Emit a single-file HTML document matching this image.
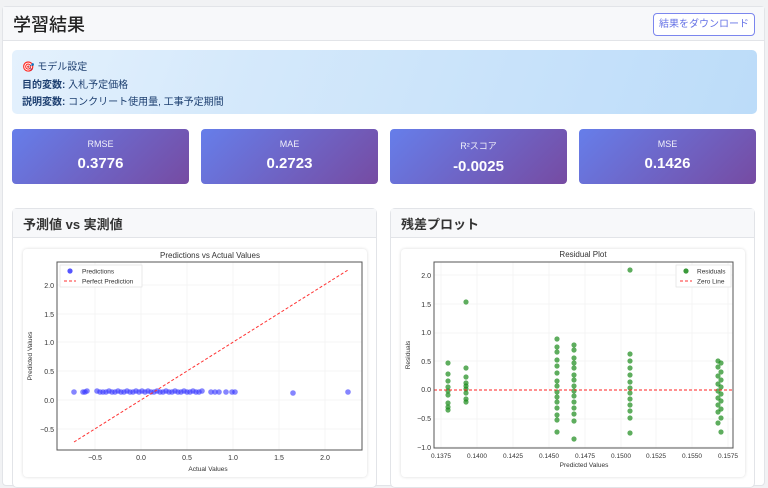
<!DOCTYPE html>
<html><head><meta charset="utf-8"><style>
*{margin:0;padding:0;box-sizing:border-box}
body{width:768px;height:480px;overflow:hidden;background:#f1f2f4;font-family:"Liberation Sans","Noto Sans CJK JP",sans-serif;position:relative}
.main{position:absolute;left:2px;top:6px;width:763px;height:480px;background:#fff;border:1px solid #e2e4e8;border-radius:4px}
.hdr{position:absolute;left:0;top:0;width:100%;height:34px;background:#f7f8fa;border-bottom:1px solid #e2e4e8}
.hdr h1{position:absolute;left:10px;top:4px;font-size:18px;font-weight:500;color:#222}
.btn{position:absolute;right:9px;top:6px;width:102px;height:23px;border:1px solid #7b86ee;border-radius:4px;color:#6673e6;font-size:10px;text-align:center;line-height:21px;background:#fff}
.info{position:absolute;left:12px;top:50px;width:745px;height:64px;border-radius:5px;background:linear-gradient(110deg,#e4f1fd 0%,#d5e9fb 30%,#bcdcf9 100%);color:#1d3f70;font-size:10px}
.info div{position:absolute;left:10px}
.m{position:absolute;top:129px;width:177px;height:55px;border-radius:4px;background:linear-gradient(135deg,#667eea,#764ba2);color:#fff;text-align:center}
.m .l{font-size:9px;margin-top:10px;opacity:.9}
.m .v{font-size:15px;font-weight:bold;margin-top:6px}
.card{position:absolute;top:208px;height:280px;border:1px solid #e2e4e8;border-radius:5px;background:#fff}
.card .ch{height:29px;background:#f7f8fa;border-bottom:1px solid #e2e4e8;font-size:13px;font-weight:bold;color:#333;padding:5px 10px}
.inner{position:absolute;top:40px;height:228px;border-radius:4px;box-shadow:0 0 3px rgba(0,0,0,.15);background:#fff}
svg{position:absolute;left:0;top:0}
svg text{font-family:"Liberation Sans",sans-serif;fill:#333}
</style></head><body>
<div class="main"><div class="hdr"><h1>学習結果</h1><div class="btn">結果をダウンロード</div></div></div>
<div class="info">
<div style="top:8px">🎯 モデル設定</div>
<div style="top:26px"><b>目的変数:</b> 入札予定価格</div>
<div style="top:43px"><b>説明変数:</b> コンクリート使用量, 工事予定期間</div>
</div>
<div class="m" style="left:12px"><div class="l">RMSE</div><div class="v">0.3776</div></div>
<div class="m" style="left:201px"><div class="l">MAE</div><div class="v">0.2723</div></div>
<div class="m" style="left:390px"><div class="l">R²スコア</div><div class="v">-0.0025</div></div>
<div class="m" style="left:579px"><div class="l">MSE</div><div class="v">0.1426</div></div>
<div class="card" style="left:12px;width:365px"><div class="ch">予測値 vs 実測値</div><div class="inner" style="left:10px;width:344px"></div></div>
<div class="card" style="left:390px;width:365px"><div class="ch">残差プロット</div><div class="inner" style="left:10px;width:344px"></div></div>
<svg width="768" height="480" font-size="7">
<!-- left chart -->
<g stroke="#eee" stroke-width="0.6">
<line x1="95" y1="262" x2="95" y2="450"/><line x1="141" y1="262" x2="141" y2="450"/><line x1="187" y1="262" x2="187" y2="450"/><line x1="233" y1="262" x2="233" y2="450"/><line x1="279" y1="262" x2="279" y2="450"/><line x1="325" y1="262" x2="325" y2="450"/>
<line x1="57" y1="285" x2="362" y2="285"/><line x1="57" y1="314" x2="362" y2="314"/><line x1="57" y1="342" x2="362" y2="342"/><line x1="57" y1="371" x2="362" y2="371"/><line x1="57" y1="400" x2="362" y2="400"/><line x1="57" y1="429" x2="362" y2="429"/>
</g>
<g fill="#3333ff" fill-opacity="0.6">
<circle cx="74" cy="392" r="2.8"/><circle cx="83" cy="392" r="2.8"/><circle cx="85" cy="392" r="2.8"/><circle cx="87" cy="391" r="2.8"/>
<circle cx="97" cy="391" r="2.8"/><circle cx="100" cy="392" r="2.8"/><circle cx="103" cy="392" r="2.8"/><circle cx="106" cy="392" r="2.8"/><circle cx="109" cy="391" r="2.8"/><circle cx="112" cy="392" r="2.8"/><circle cx="115" cy="392" r="2.8"/><circle cx="118" cy="391" r="2.8"/><circle cx="121" cy="392" r="2.8"/><circle cx="124" cy="392" r="2.8"/><circle cx="127" cy="391" r="2.8"/><circle cx="130" cy="392" r="2.8"/><circle cx="133" cy="392" r="2.8"/><circle cx="136" cy="391" r="2.8"/><circle cx="139" cy="392" r="2.8"/><circle cx="142" cy="391" r="2.8"/><circle cx="145" cy="392" r="2.8"/><circle cx="148" cy="391" r="2.8"/><circle cx="151" cy="392" r="2.8"/><circle cx="154" cy="392" r="2.8"/><circle cx="157" cy="391" r="2.8"/><circle cx="160" cy="392" r="2.8"/><circle cx="163" cy="392" r="2.8"/><circle cx="166" cy="391" r="2.8"/><circle cx="169" cy="392" r="2.8"/><circle cx="172" cy="392" r="2.8"/><circle cx="175" cy="391" r="2.8"/><circle cx="178" cy="392" r="2.8"/><circle cx="181" cy="392" r="2.8"/><circle cx="184" cy="391" r="2.8"/><circle cx="187" cy="392" r="2.8"/><circle cx="190" cy="392" r="2.8"/><circle cx="193" cy="391" r="2.8"/><circle cx="196" cy="392" r="2.8"/><circle cx="199" cy="392" r="2.8"/><circle cx="202" cy="391" r="2.8"/>
<circle cx="211" cy="392" r="2.8"/><circle cx="215" cy="392" r="2.8"/><circle cx="219" cy="392" r="2.8"/><circle cx="226" cy="392" r="2.8"/><circle cx="232" cy="392" r="2.8"/><circle cx="235" cy="392" r="2.8"/><circle cx="293" cy="393" r="2.8"/><circle cx="348" cy="392" r="2.8"/>
</g>
<line x1="74" y1="442" x2="348" y2="270" stroke="#ff3333" stroke-width="1" stroke-dasharray="3,2"/>
<rect x="57" y="262" width="305" height="188" fill="none" stroke="#555" stroke-width="1"/>
<text x="210" y="258" text-anchor="middle" font-size="8">Predictions vs Actual Values</text>
<rect x="60" y="265" width="82" height="22" fill="#fff" stroke="#ddd" stroke-width="0.6"/>
<circle cx="70" cy="271" r="2.6" fill="#5555ff"/><text x="82" y="273.5" font-size="6.5">Predictions</text>
<line x1="64" y1="281" x2="76" y2="281" stroke="#f33" stroke-dasharray="3,2"/><text x="82" y="283.5" font-size="6.5">Perfect Prediction</text>
<g text-anchor="end"><text x="54" y="288">2.0</text><text x="54" y="317">1.5</text><text x="54" y="345">1.0</text><text x="54" y="374">0.5</text><text x="54" y="403">0.0</text><text x="54" y="432">−0.5</text></g>
<g text-anchor="middle"><text x="95" y="460">−0.5</text><text x="141" y="460">0.0</text><text x="187" y="460">0.5</text><text x="233" y="460">1.0</text><text x="279" y="460">1.5</text><text x="325" y="460">2.0</text><text x="208" y="471" font-size="6.5">Actual Values</text></g>
<text transform="translate(32,356) rotate(-90)" text-anchor="middle" font-size="6.5">Predicted Values</text>
<!-- right chart -->
<g stroke="#eee" stroke-width="0.6">
<line x1="441" y1="262" x2="441" y2="448"/><line x1="477" y1="262" x2="477" y2="448"/><line x1="513" y1="262" x2="513" y2="448"/><line x1="549" y1="262" x2="549" y2="448"/><line x1="585" y1="262" x2="585" y2="448"/><line x1="621" y1="262" x2="621" y2="448"/><line x1="656" y1="262" x2="656" y2="448"/><line x1="692" y1="262" x2="692" y2="448"/><line x1="728" y1="262" x2="728" y2="448"/>
<line x1="434" y1="275" x2="733" y2="275"/><line x1="434" y1="304" x2="733" y2="304"/><line x1="434" y1="333" x2="733" y2="333"/><line x1="434" y1="361" x2="733" y2="361"/><line x1="434" y1="419" x2="733" y2="419"/><line x1="434" y1="447" x2="733" y2="447"/>
</g>
<g fill="#1a8a1a" fill-opacity="0.7">
<circle cx="448" cy="363" r="2.6"/><circle cx="448" cy="374" r="2.6"/><circle cx="448" cy="381" r="2.6"/><circle cx="448" cy="387" r="2.6"/><circle cx="448" cy="391" r="2.6"/><circle cx="448" cy="395" r="2.6"/><circle cx="448" cy="403" r="2.6"/><circle cx="448" cy="407" r="2.6"/><circle cx="448" cy="410" r="2.6"/>
<circle cx="466" cy="302" r="2.6"/><circle cx="466" cy="368" r="2.6"/><circle cx="466" cy="377" r="2.6"/><circle cx="466" cy="383" r="2.6"/><circle cx="466" cy="386" r="2.6"/><circle cx="466" cy="389" r="2.6"/><circle cx="466" cy="393" r="2.6"/><circle cx="466" cy="399" r="2.6"/><circle cx="466" cy="402" r="2.6"/>
<circle cx="557" cy="339" r="2.6"/><circle cx="557" cy="347" r="2.6"/><circle cx="557" cy="352" r="2.6"/><circle cx="557" cy="360" r="2.6"/><circle cx="557" cy="366" r="2.6"/><circle cx="557" cy="373" r="2.6"/><circle cx="557" cy="381" r="2.6"/><circle cx="557" cy="386" r="2.6"/><circle cx="557" cy="392" r="2.6"/><circle cx="557" cy="397" r="2.6"/><circle cx="557" cy="402" r="2.6"/><circle cx="557" cy="408" r="2.6"/><circle cx="557" cy="415" r="2.6"/><circle cx="557" cy="420" r="2.6"/><circle cx="557" cy="432" r="2.6"/>
<circle cx="574" cy="345" r="2.6"/><circle cx="574" cy="350" r="2.6"/><circle cx="574" cy="358" r="2.6"/><circle cx="574" cy="363" r="2.6"/><circle cx="574" cy="368" r="2.6"/><circle cx="574" cy="375" r="2.6"/><circle cx="574" cy="380" r="2.6"/><circle cx="574" cy="386" r="2.6"/><circle cx="574" cy="391" r="2.6"/><circle cx="574" cy="396" r="2.6"/><circle cx="574" cy="402" r="2.6"/><circle cx="574" cy="408" r="2.6"/><circle cx="574" cy="414" r="2.6"/><circle cx="574" cy="421" r="2.6"/><circle cx="574" cy="439" r="2.6"/>
<circle cx="630" cy="270" r="2.6"/><circle cx="630" cy="354" r="2.6"/><circle cx="630" cy="361" r="2.6"/><circle cx="630" cy="368" r="2.6"/><circle cx="630" cy="375" r="2.6"/><circle cx="630" cy="382" r="2.6"/><circle cx="630" cy="388" r="2.6"/><circle cx="630" cy="393" r="2.6"/><circle cx="630" cy="399" r="2.6"/><circle cx="630" cy="405" r="2.6"/><circle cx="630" cy="411" r="2.6"/><circle cx="630" cy="418" r="2.6"/><circle cx="630" cy="433" r="2.6"/>
<circle cx="718" cy="361" r="2.6"/><circle cx="718" cy="367" r="2.6"/><circle cx="718" cy="376" r="2.6"/><circle cx="718" cy="384" r="2.6"/><circle cx="718" cy="391" r="2.6"/><circle cx="718" cy="398" r="2.6"/><circle cx="718" cy="405" r="2.6"/><circle cx="718" cy="412" r="2.6"/><circle cx="718" cy="423" r="2.6"/>
<circle cx="721" cy="363" r="2.6"/><circle cx="721" cy="372" r="2.6"/><circle cx="721" cy="380" r="2.6"/><circle cx="721" cy="387" r="2.6"/><circle cx="721" cy="394" r="2.6"/><circle cx="721" cy="401" r="2.6"/><circle cx="721" cy="409" r="2.6"/><circle cx="721" cy="418" r="2.6"/><circle cx="721" cy="432" r="2.6"/>
</g>
<line x1="434" y1="390" x2="733" y2="390" stroke="#ff2222" stroke-width="1" stroke-dasharray="3,2"/>
<rect x="434" y="262" width="299" height="186" fill="none" stroke="#555" stroke-width="1"/>
<text x="583" y="257" text-anchor="middle" font-size="8">Residual Plot</text>
<rect x="676" y="265" width="55" height="22" fill="#fff" stroke="#ddd" stroke-width="0.6"/>
<circle cx="686" cy="271" r="2.6" fill="#3a9a3a"/><text x="697" y="273.5" font-size="6.5">Residuals</text>
<line x1="680" y1="281" x2="692" y2="281" stroke="#f33" stroke-dasharray="3,2"/><text x="697" y="283.5" font-size="6.5">Zero Line</text>
<g text-anchor="end"><text x="431" y="278">2.0</text><text x="431" y="307">1.5</text><text x="431" y="335">1.0</text><text x="431" y="364">0.5</text><text x="431" y="392">0.0</text><text x="431" y="421">−0.5</text><text x="431" y="450">−1.0</text></g>
<g text-anchor="middle" font-size="6.5"><text x="441" y="458">0.1375</text><text x="477" y="458">0.1400</text><text x="513" y="458">0.1425</text><text x="549" y="458">0.1450</text><text x="585" y="458">0.1475</text><text x="621" y="458">0.1500</text><text x="656" y="458">0.1525</text><text x="692" y="458">0.1550</text><text x="728" y="458">0.1575</text><text x="584" y="467">Predicted Values</text></g>
<text transform="translate(410,355) rotate(-90)" text-anchor="middle" font-size="6.5">Residuals</text>
</svg>
</body></html>
